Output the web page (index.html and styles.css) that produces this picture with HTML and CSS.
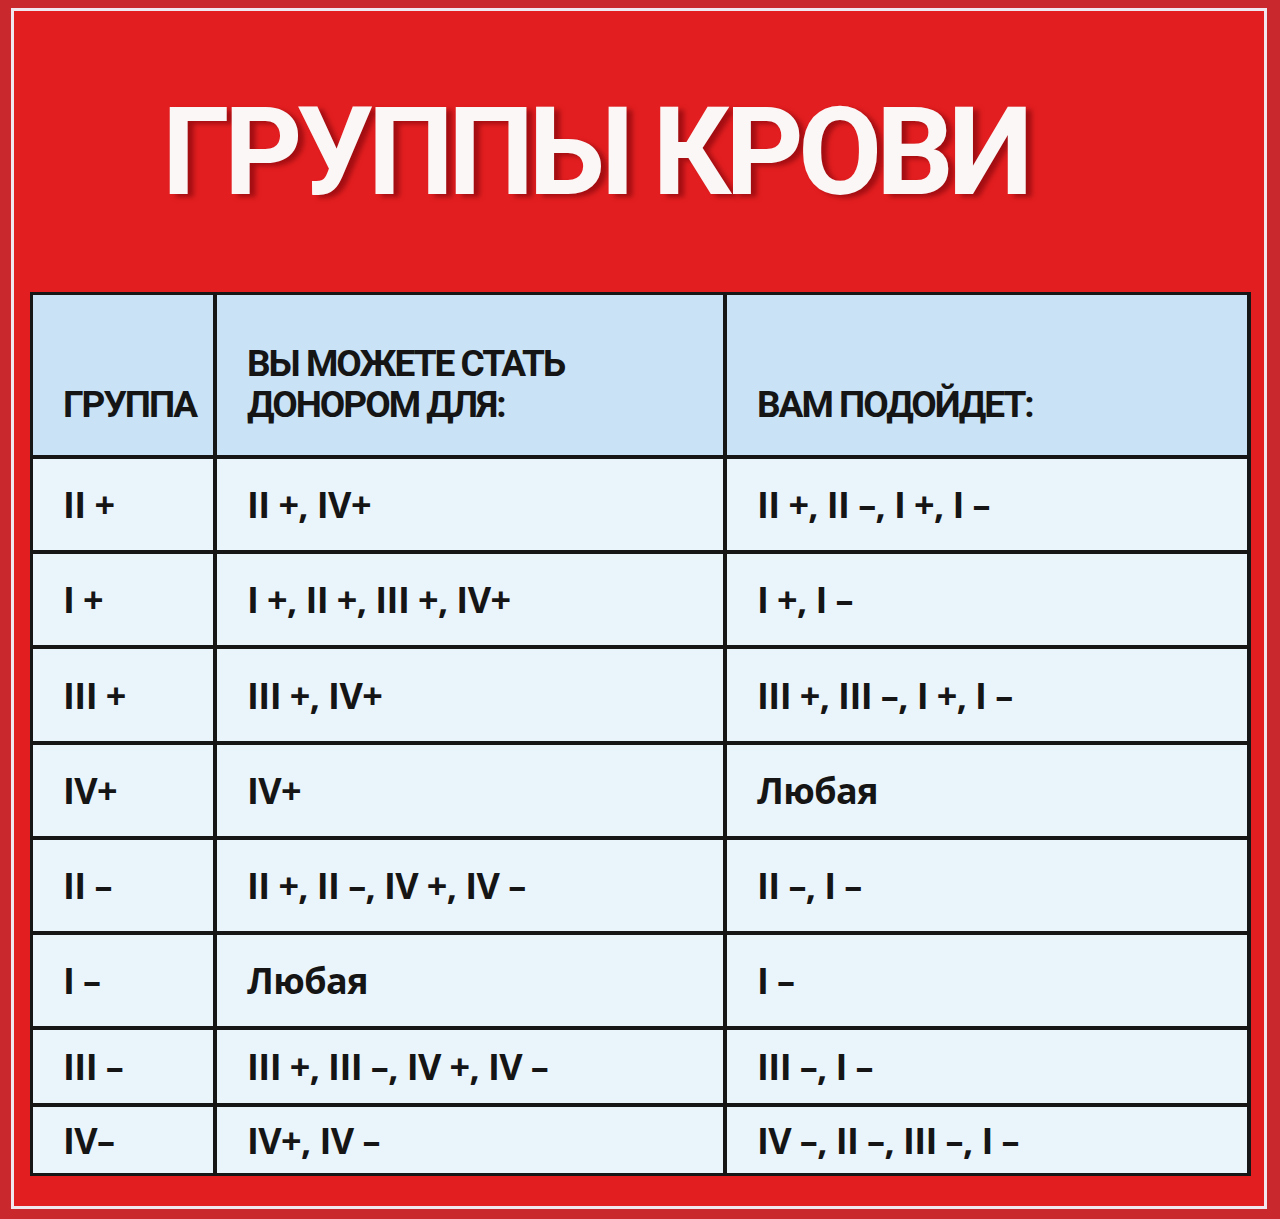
FILE: index.html
```html
<!DOCTYPE html>
<html lang="ru">
<head>
<meta charset="utf-8">
<title>Группы крови</title>
<link rel="stylesheet" href="styles.css">
</head>
<body>
<div class="frame">
  <h1 class="title">ГРУППЫ КРОВИ</h1>
  <div class="table">
    <div class="cell head">ГРУППА</div>
    <div class="cell head">ВЫ МОЖЕТЕ СТАТЬ<br>ДОНОРОМ ДЛЯ:</div>
    <div class="cell head">ВАМ ПОДОЙДЕТ:</div>

    <div class="cell">II +</div>
    <div class="cell">II +, IV+</div>
    <div class="cell">II +, II –, I +, I –</div>

    <div class="cell">I +</div>
    <div class="cell">I +, II +, III +, IV+</div>
    <div class="cell">I +, I –</div>

    <div class="cell">III +</div>
    <div class="cell">III +, IV+</div>
    <div class="cell">III +, III –, I +, I –</div>

    <div class="cell">IV+</div>
    <div class="cell">IV+</div>
    <div class="cell">Любая</div>

    <div class="cell">II –</div>
    <div class="cell">II +, II –, IV +, IV –</div>
    <div class="cell">II –, I –</div>

    <div class="cell">I –</div>
    <div class="cell">Любая</div>
    <div class="cell">I –</div>

    <div class="cell">III –</div>
    <div class="cell">III +, III –, IV +, IV –</div>
    <div class="cell">III –, I –</div>

    <div class="cell">IV–</div>
    <div class="cell">IV+, IV –</div>
    <div class="cell">IV –, II –, III –, I –</div>
  </div>
</div>
</body>
</html>
```

FILE: styles.css
```css
html, body {
  margin: 0;
  padding: 0;
}

body {
  background: #c9292d;
  width: 1280px;
  height: 1219px;
  overflow: hidden;
  padding: 8px 13px 10px 11px;
  box-sizing: border-box;
}

.frame {
  height: 100%;
  box-sizing: border-box;
  border: 3px solid #f1e7ee;
  background: #e31e20;
  padding: 0 12px 0 16px;
}

.title {
  margin: 0;
  padding: 81px 0 78px 132px;
  height: 122px;
  font-family: Roboto, "Liberation Sans", sans-serif;
  font-weight: 700;
  font-size: 122px;
  line-height: 1;
  letter-spacing: -6px;
  color: #fbf7f7;
  text-shadow: 6px 3px 5px rgba(110, 0, 8, 0.55);
  white-space: nowrap;
}

.table {
  display: grid;
  grid-template-columns: 180px 506px 520px;
  grid-template-rows: 160px 91px 91px 92px 91px 91px 91px 73px 66px;
  gap: 4px;
  padding: 3px;
  background: #161616;
  width: 1221px;
  box-sizing: border-box;
}

.cell {
  background: #eaf4fb;
  display: flex;
  align-items: center;
  padding-left: 30px;
  font-family: "Open Sans", "Noto Sans", sans-serif;
  font-weight: 700;
  font-size: 36px;
  letter-spacing: -0.6px;
  color: #151515;
  white-space: nowrap;
}

.head {
  background: #c9e2f5;
  align-items: flex-end;
  padding-bottom: 30px;
  font-family: Roboto, "Liberation Sans", sans-serif;
  font-size: 37px;
  line-height: 41px;
  letter-spacing: -2px;
  box-sizing: border-box;
}
```
